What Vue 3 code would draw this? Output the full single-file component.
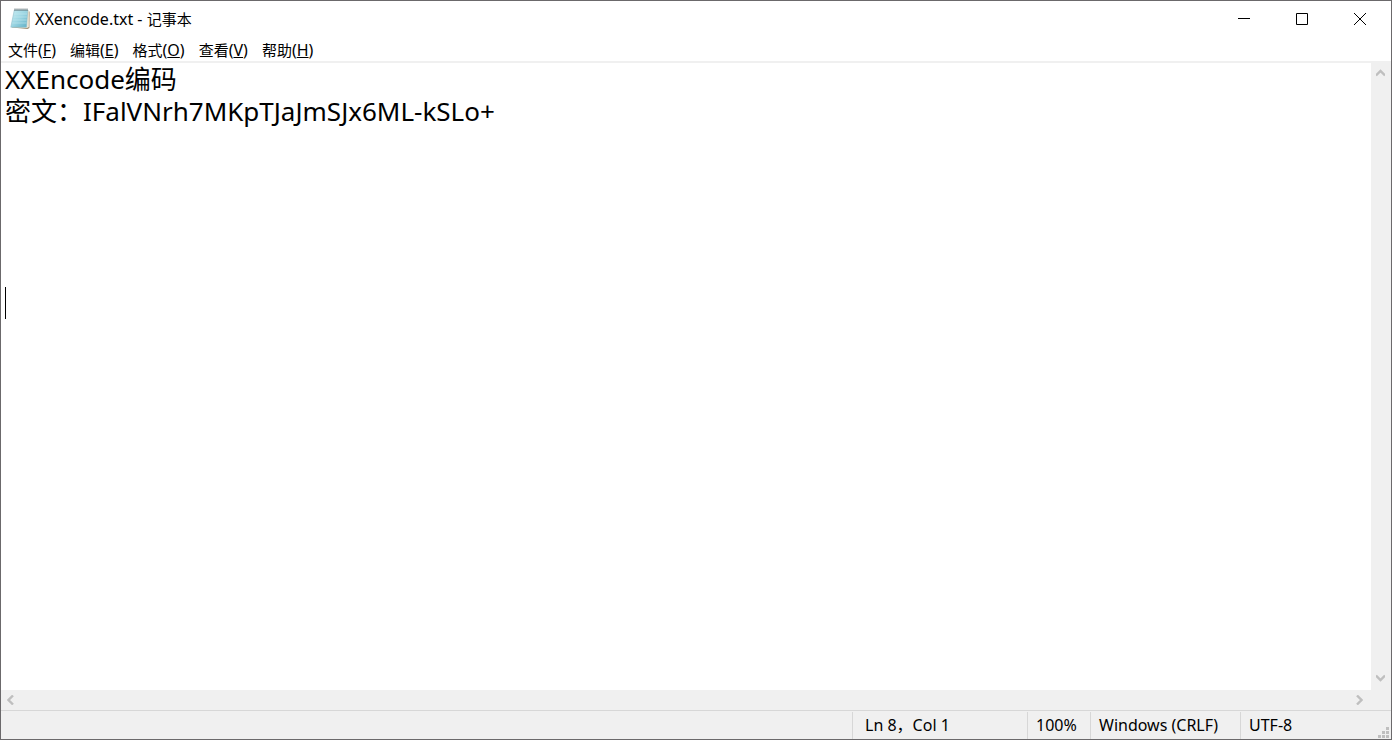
<script setup>
import { ref } from 'vue'

const fileName = 'XXencode.txt'
const text = ref('XXEncode编码\n密文：IFalVNrh7MKpTJaJmSJx6ML-kSLo+\n\n\n\n\n\n')
const menus = [
  { label: '文件', key: 'F' },
  { label: '编辑', key: 'E' },
  { label: '格式', key: 'O' },
  { label: '查看', key: 'V' },
  { label: '帮助', key: 'H' },
]
</script>

<template>
  <div class="window">
    <header class="titlebar">
      <svg class="app-icon" width="20" height="22" viewBox="0 0 20 22" aria-hidden="true">
        <defs>
          <linearGradient id="page" x1="0" y1="0" x2="1" y2="1">
            <stop offset="0" stop-color="#c9edf3" />
            <stop offset=".5" stop-color="#9bd5e2" />
            <stop offset="1" stop-color="#5fafc6" />
          </linearGradient>
        </defs>
        <path d="M5 3 19.6 3.5 19.4 20 17.5 21 2 19.5Z" fill="#a08f72" />
        <path d="M4.5 2H18.8V19L17 20 2 19Z" fill="#efe9da" />
        <path d="M4.3 2H17.8L16.5 19.2H.8Z" fill="url(#page)" stroke="#8fbecb" stroke-width=".6" />
        <path d="M3.8 6H17M3.4 9H16.8M2.8 12H16.6M2.2 15H16.4" stroke="#c5e8ef" stroke-width=".6" />
        <path d="M5 .5V3M7 .5V3M9 .5V3M11 .5V3M13 .5V3M15 .5V3M17 .5V3" stroke="#59666b" stroke-width=".9" />
      </svg>
      <h1 class="title">{{ fileName }} - <span>记事本</span></h1>
      <div class="controls">
        <button type="button" aria-label="最小化">
          <svg width="12" height="12" viewBox="0 0 12 12"><path d="M0 5.5H12" /></svg>
        </button>
        <button type="button" aria-label="最大化">
          <svg width="12" height="12" viewBox="0 0 12 12"><path d="M.5 .5H11.5V11.5H.5Z" /></svg>
        </button>
        <button type="button" aria-label="关闭">
          <svg width="12" height="12" viewBox="0 0 12 12"><path d="M0 0 12 12M12 0 0 12" /></svg>
        </button>
      </div>
    </header>

    <nav class="menubar">
      <button v-for="m in menus" :key="m.key" type="button">{{ m.label }}<span>(<u>{{ m.key }}</u>)</span></button>
    </nav>

    <main class="work">
      <div class="editor">
        <textarea v-model="text" aria-label="文本编辑器" wrap="off" spellcheck="false"></textarea>
        <span class="caret"></span>
      </div>
      <div class="scroll vertical">
        <button type="button" aria-label="向上滚动">
          <svg width="9" height="8" viewBox="0 0 9 8"><path d="M0 6.5 4.5 2 9 6.5" /></svg>
        </button>
        <button type="button" aria-label="向下滚动">
          <svg width="9" height="8" viewBox="0 0 9 8"><path d="M0 1.5 4.5 6 9 1.5" /></svg>
        </button>
      </div>
      <div class="scroll horizontal">
        <button type="button" aria-label="向左滚动">
          <svg width="7" height="10" viewBox="0 0 7 10"><path d="M6 .5 1.5 5 6 9.5" /></svg>
        </button>
        <button type="button" aria-label="向右滚动">
          <svg width="7" height="10" viewBox="0 0 7 10"><path d="M1 .5 5.5 5 1 9.5" /></svg>
        </button>
      </div>
    </main>

    <footer class="status">
      <span class="position">Ln 8，Col 1</span>
      <span class="zoom">100%</span>
      <span class="ending">Windows (CRLF)</span>
      <span class="encoding">UTF-8</span>
      <svg class="grip" width="11" height="11" viewBox="0 0 11 11" aria-hidden="true">
        <path d="M8 0h3v3h-3zM4 4h3v3h-3zM8 4h3v3h-3zM0 8h3v3h-3zM4 8h3v3h-3zM8 8h3v3h-3z" fill="#bfbfbf" />
      </svg>
    </footer>
  </div>
</template>

<style>
body {
  background: #fff;
}
</style>

<style scoped>
.window {
  box-sizing: border-box;
  display: flex;
  flex-direction: column;
  height: 100vh;
  border: 1px solid #6b696b;
  background: #fff;
  color: #000;
  font: 15px/20px "Noto Sans", "Noto Sans CJK SC", sans-serif;
}
button {
  margin: 0;
  padding: 0;
  border: 0;
  background: none;
  color: inherit;
  font: inherit;
}
.titlebar {
  display: flex;
  align-items: center;
  height: 36px;
  padding: 0 2px 0 9px;
}
.title {
  margin: 0 0 0 5px;
  font-size: 16px;
  font-weight: 400;
}
.title span {
  font-size: 15px;
}
.controls {
  display: flex;
  align-self: stretch;
  margin-left: auto;
}
.controls button {
  display: flex;
  align-items: center;
  justify-content: center;
  width: 58px;
}
.controls path {
  fill: none;
  stroke: #000;
}
.menubar {
  display: flex;
  gap: 14px;
  height: 24px;
  padding: 0 7px;
  border-bottom: 2px solid #f0f0f0;
}
.menubar button {
  font-size: 15px;
  line-height: 26px;
}
.menubar span {
  font-size: 16px;
}
.work {
  display: grid;
  flex: 1;
  grid-template: 1fr 20px / 1fr 20px;
  min-height: 0;
  background: #f0f0f0;
}
.editor {
  position: relative;
  background: #fff;
}
textarea {
  display: block;
  box-sizing: border-box;
  width: 100%;
  height: 100%;
  padding: 0 4px;
  border: 0;
  outline: 0;
  background: none;
  color: #000;
  font: 26px/32px "Noto Sans", "Noto Sans CJK SC", sans-serif;
  overflow: hidden;
  resize: none;
}
.caret {
  position: absolute;
  top: 224px;
  left: 4px;
  width: 1px;
  height: 32px;
  background: #000;
}
.scroll {
  display: flex;
  justify-content: space-between;
}
.vertical {
  flex-direction: column;
  padding-bottom: 2px;
}
.horizontal {
  padding-right: 2px;
}
.scroll button {
  display: flex;
  align-items: center;
  justify-content: center;
  width: 19px;
  height: 20px;
}
.scroll path {
  fill: none;
  stroke: #bfbfbf;
  stroke-width: 2.4;
}
.status {
  position: relative;
  display: flex;
  justify-content: flex-end;
  height: 28px;
  border-top: 1px solid #d7d7d7;
  background: #f0f0f0;
  font-size: 16px;
  line-height: 27px;
}
.status span {
  box-sizing: border-box;
  margin-top: 1px;
  padding-left: 8px;
  border-left: 1px solid #d7d7d7;
}
.status .position {
  width: 175px;
  padding-left: 12px;
}
.zoom {
  width: 63px;
}
.ending {
  width: 150px;
}
.encoding {
  width: 151px;
}
.grip {
  position: absolute;
  right: 2px;
  bottom: 1px;
}
</style>
